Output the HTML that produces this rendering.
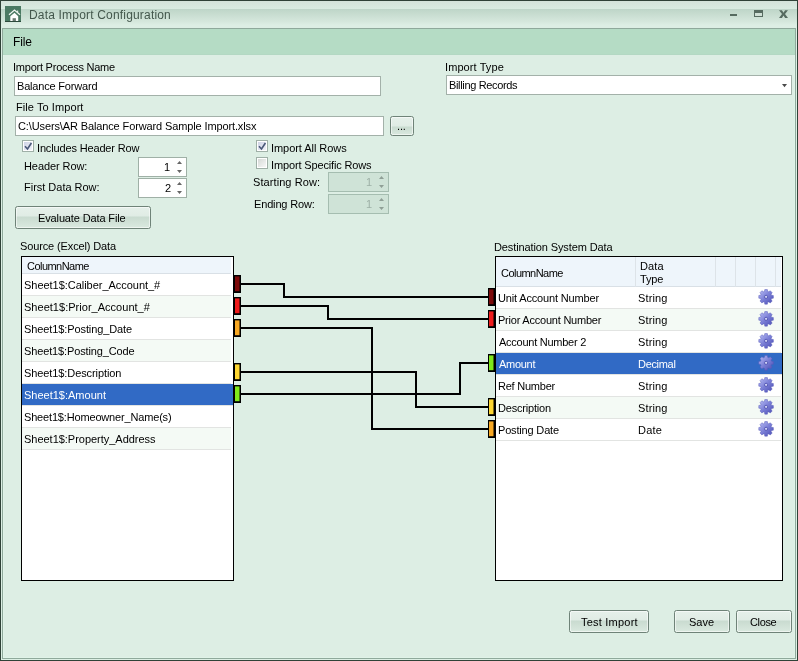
<!DOCTYPE html><html><head><meta charset="utf-8"><title>Data Import Configuration</title><style>
html,body{margin:0;padding:0}
body{width:798px;height:661px;overflow:hidden;position:relative;background:#2f4237;font-family:'Liberation Sans',sans-serif;font-size:11px;color:#000}
div,svg{position:absolute;box-sizing:border-box}
.t{white-space:pre;line-height:16px;height:16px;will-change:transform}
.frame{left:1px;top:1px;width:796px;height:659px;background:#dcefe4}
.title{left:1px;top:1px;width:796px;height:27px;background:linear-gradient(#d4e3da 0px,#d9ece1 8px,#bed5c8 8px,#d6e8dd 21px,#ddeee4 24px,#ddeee4 27px)}
.client{left:2px;top:28px;width:794px;height:631px;background:#ddeee4;border:1px solid #8fa99b}
.clientin{left:3px;top:29px;width:792px;height:629px;border:1px solid #e0f3e8;border-top:none}
.menu{left:3px;top:29px;width:792px;height:26px;background:#b5dcc5;border-bottom:1px solid #b3d8c3}
.tb{background:#fff;border:1px solid #a3b1a9}
.btn{border:1px solid #6f8378;border-radius:2.5px;background:linear-gradient(#e6f0ea 0px,#e0ece5 9px,#c9dbd0 10px,#dae9df 100%);box-shadow:inset 0 0 0 1px rgba(255,255,255,.55)}
.spin{background:#fff;border:1px solid #9fb0a6}
.spin.dis{background:#cfe3d7;border-color:#a5bdb0}
.cb{width:12px;height:12px;border:1px solid #9fb0a7;background:#fff}
.cb i{position:absolute;left:1px;top:1px;width:8px;height:8px;background:linear-gradient(135deg,#cfd3e6,#f1f2f8)}
.grid{background:#fff;border:1px solid #000}
.hdr{background:#eef5fb;border-bottom:1px solid #d9e0e6}
.row{height:22px;border-bottom:1px solid #e2e4e2}
.row.alt{background:#f4faf5}
.row.sel{background:#316ac5;width:100% !important}
.vs{width:1px;background:#dde3e8}
.mk{width:7px;height:18px;border:1px solid #000}
</style></head><body>
<div class="frame"></div><div class="title"></div><div class="client"></div><div class="clientin"></div><div class="menu"></div>
<svg style="left:5px;top:6px" width="16" height="16" viewBox="0 0 16 16"><rect width="16" height="16" fill="#4b7a63"/><path d="M9.5 6.7 L13.2 10.2 V15 H5.3 V10.2 Z" fill="#fff"/><path d="M4 8.8 L9.5 4 L15 8.8" fill="none" stroke="#f4f8f5" stroke-width="1.2"/><rect x="12" y="4.6" width="1.2" height="1.8" fill="#e6efe9"/><rect x="7.6" y="12.2" width="3.3" height="2.8" fill="#6b7a72"/><rect x="0" y="15" width="16" height="1" fill="#2d4a3c"/></svg>
<svg style="left:725px;top:6px" width="68" height="16" viewBox="725 6 68 16"><rect x="730" y="14" width="7" height="2" fill="#566b60"/><rect x="754.5" y="10.5" width="8" height="6" fill="#cfdfd5" stroke="#566b60"/><rect x="754" y="10" width="9" height="3" fill="#566b60"/><path d="M779 10.2h2.9l1.6 2.6 1.6-2.6h2.9l-3 3.9 3 3.9h-2.9l-1.6-2.6-1.6 2.6h-2.9l3-3.9z" fill="#566b60"/></svg>
<div class="tb" style="left:14px;top:76px;width:367px;height:20px"></div>
<div class="tb" style="left:446px;top:75px;width:346px;height:20px"></div>
<svg style="left:781px;top:84px" width="7" height="4"><path d="M1 0 H6 L3.5 3.2 Z" fill="#4a4a4a"/></svg>
<div class="tb" style="left:15px;top:116px;width:369px;height:20px"></div>
<div class="btn" style="left:390px;top:116px;width:24px;height:20px"></div>
<div class="cb" style="left:22px;top:140px"><i></i><svg style="left:1px;top:0px" width="10" height="10"><path d="M1 5.2 L3.5 8 L7.4 2" fill="none" stroke="#4a5878" stroke-width="1.6"/></svg></div>
<div class="cb" style="left:256px;top:140px"><i></i><svg style="left:1px;top:0px" width="10" height="10"><path d="M1 5.2 L3.5 8 L7.4 2" fill="none" stroke="#4a5878" stroke-width="1.6"/></svg></div>
<div class="cb" style="left:256px;top:157px"><i style="background:linear-gradient(135deg,#d5d9d6,#f7f7f7)"></i></div>
<div class="spin" style="left:138px;top:157px;width:49px;height:20px"><svg style="right:3px;top:3px" width="7" height="13"><path d="M1 3 L3.5 0 L6 3 Z M1 9 L3.5 12 L6 9 Z" fill="#666"/></svg></div>
<div class="spin" style="left:138px;top:178px;width:49px;height:20px"><svg style="right:3px;top:3px" width="7" height="13"><path d="M1 3 L3.5 0 L6 3 Z M1 9 L3.5 12 L6 9 Z" fill="#666"/></svg></div>
<div class="spin dis" style="left:328px;top:172px;width:61px;height:20px"><svg style="right:3px;top:3px" width="7" height="13"><path d="M1 3 L3.5 0 L6 3 Z M1 9 L3.5 12 L6 9 Z" fill="#8f9f96"/></svg></div>
<div class="spin dis" style="left:328px;top:194px;width:61px;height:20px"><svg style="right:3px;top:3px" width="7" height="13"><path d="M1 3 L3.5 0 L6 3 Z M1 9 L3.5 12 L6 9 Z" fill="#8f9f96"/></svg></div>
<div class="btn" style="left:15px;top:206px;width:136px;height:23px"></div>
<div class="btn" style="left:569px;top:610px;width:80px;height:23px"></div>
<div class="btn" style="left:674px;top:610px;width:56px;height:23px"></div>
<div class="btn" style="left:736px;top:610px;width:56px;height:23px"></div>
<div class="grid" style="left:21px;top:256px;width:213px;height:325px">
<div class="hdr" style="left:0;top:0;width:209px;height:17px"></div>
<div class="row" style="left:0;top:17px;width:209px"></div>
<div class="row alt" style="left:0;top:39px;width:209px"></div>
<div class="row" style="left:0;top:61px;width:209px"></div>
<div class="row alt" style="left:0;top:83px;width:209px"></div>
<div class="row" style="left:0;top:105px;width:209px"></div>
<div class="row alt sel" style="left:0;top:127px;width:209px"></div>
<div class="row" style="left:0;top:149px;width:209px"></div>
<div class="row alt" style="left:0;top:171px;width:209px"></div>
</div>
<div class="grid" style="left:495px;top:256px;width:288px;height:325px">
<div class="hdr" style="left:0;top:0;width:285px;height:30px"></div>
<div class="vs" style="left:139px;top:0px;height:30px"></div>
<div class="vs" style="left:219px;top:0px;height:30px"></div>
<div class="vs" style="left:239px;top:0px;height:30px"></div>
<div class="vs" style="left:259px;top:0px;height:30px"></div>
<div class="vs" style="left:279px;top:0px;height:30px"></div>
<div class="row" style="left:0;top:30px;width:285px"></div>
<div class="row alt" style="left:0;top:52px;width:285px"></div>
<div class="row" style="left:0;top:74px;width:285px"></div>
<div class="row alt sel" style="left:0;top:96px;width:285px"></div>
<div class="row" style="left:0;top:118px;width:285px"></div>
<div class="row alt" style="left:0;top:140px;width:285px"></div>
<div class="row" style="left:0;top:162px;width:285px"></div>
</div>
<svg style="left:0;top:0" width="798" height="661" viewBox="0 0 798 661"><linearGradient id="gg" x1="0" y1="0" x2="1" y2="1"><stop offset="0" stop-color="#bdc1f6"/><stop offset=".5" stop-color="#7a7ed6"/><stop offset="1" stop-color="#4a4db2"/></linearGradient>
<g transform="translate(758.6 289.0) scale(.935)"><path d="M6.6 0.6h2.8l.3 1.9 1.2.5 1.6-1.1 2 2-1.1 1.6.5 1.2 1.9.3v2.8l-1.9.3-.5 1.2 1.1 1.6-2 2-1.6-1.1-1.2.5-.3 1.9H6.6l-.3-1.9-1.2-.5-1.6 1.1-2-2 1.1-1.6-.5-1.2L.2 9.8V7l1.9-.3.5-1.2-1.1-1.6 2-2 1.6 1.1 1.2-.5z" fill="url(#gg)" stroke="#5558b8" stroke-width=".5"/><circle cx="8" cy="8.4" r="1.7" fill="#cfd2f4" stroke="#4c4fae" stroke-width=".9"/></g>
<g transform="translate(758.6 311.0) scale(.935)"><path d="M6.6 0.6h2.8l.3 1.9 1.2.5 1.6-1.1 2 2-1.1 1.6.5 1.2 1.9.3v2.8l-1.9.3-.5 1.2 1.1 1.6-2 2-1.6-1.1-1.2.5-.3 1.9H6.6l-.3-1.9-1.2-.5-1.6 1.1-2-2 1.1-1.6-.5-1.2L.2 9.8V7l1.9-.3.5-1.2-1.1-1.6 2-2 1.6 1.1 1.2-.5z" fill="url(#gg)" stroke="#5558b8" stroke-width=".5"/><circle cx="8" cy="8.4" r="1.7" fill="#cfd2f4" stroke="#4c4fae" stroke-width=".9"/></g>
<g transform="translate(758.6 333.0) scale(.935)"><path d="M6.6 0.6h2.8l.3 1.9 1.2.5 1.6-1.1 2 2-1.1 1.6.5 1.2 1.9.3v2.8l-1.9.3-.5 1.2 1.1 1.6-2 2-1.6-1.1-1.2.5-.3 1.9H6.6l-.3-1.9-1.2-.5-1.6 1.1-2-2 1.1-1.6-.5-1.2L.2 9.8V7l1.9-.3.5-1.2-1.1-1.6 2-2 1.6 1.1 1.2-.5z" fill="url(#gg)" stroke="#5558b8" stroke-width=".5"/><circle cx="8" cy="8.4" r="1.7" fill="#cfd2f4" stroke="#4c4fae" stroke-width=".9"/></g>
<g transform="translate(758.6 355.0) scale(.935)"><path d="M6.6 0.6h2.8l.3 1.9 1.2.5 1.6-1.1 2 2-1.1 1.6.5 1.2 1.9.3v2.8l-1.9.3-.5 1.2 1.1 1.6-2 2-1.6-1.1-1.2.5-.3 1.9H6.6l-.3-1.9-1.2-.5-1.6 1.1-2-2 1.1-1.6-.5-1.2L.2 9.8V7l1.9-.3.5-1.2-1.1-1.6 2-2 1.6 1.1 1.2-.5z" fill="url(#gg)" stroke="#5558b8" stroke-width=".5"/><circle cx="8" cy="8.4" r="1.7" fill="#cfd2f4" stroke="#4c4fae" stroke-width=".9"/></g>
<g transform="translate(758.6 377.0) scale(.935)"><path d="M6.6 0.6h2.8l.3 1.9 1.2.5 1.6-1.1 2 2-1.1 1.6.5 1.2 1.9.3v2.8l-1.9.3-.5 1.2 1.1 1.6-2 2-1.6-1.1-1.2.5-.3 1.9H6.6l-.3-1.9-1.2-.5-1.6 1.1-2-2 1.1-1.6-.5-1.2L.2 9.8V7l1.9-.3.5-1.2-1.1-1.6 2-2 1.6 1.1 1.2-.5z" fill="url(#gg)" stroke="#5558b8" stroke-width=".5"/><circle cx="8" cy="8.4" r="1.7" fill="#cfd2f4" stroke="#4c4fae" stroke-width=".9"/></g>
<g transform="translate(758.6 399.0) scale(.935)"><path d="M6.6 0.6h2.8l.3 1.9 1.2.5 1.6-1.1 2 2-1.1 1.6.5 1.2 1.9.3v2.8l-1.9.3-.5 1.2 1.1 1.6-2 2-1.6-1.1-1.2.5-.3 1.9H6.6l-.3-1.9-1.2-.5-1.6 1.1-2-2 1.1-1.6-.5-1.2L.2 9.8V7l1.9-.3.5-1.2-1.1-1.6 2-2 1.6 1.1 1.2-.5z" fill="url(#gg)" stroke="#5558b8" stroke-width=".5"/><circle cx="8" cy="8.4" r="1.7" fill="#cfd2f4" stroke="#4c4fae" stroke-width=".9"/></g>
<g transform="translate(758.6 421.0) scale(.935)"><path d="M6.6 0.6h2.8l.3 1.9 1.2.5 1.6-1.1 2 2-1.1 1.6.5 1.2 1.9.3v2.8l-1.9.3-.5 1.2 1.1 1.6-2 2-1.6-1.1-1.2.5-.3 1.9H6.6l-.3-1.9-1.2-.5-1.6 1.1-2-2 1.1-1.6-.5-1.2L.2 9.8V7l1.9-.3.5-1.2-1.1-1.6 2-2 1.6 1.1 1.2-.5z" fill="url(#gg)" stroke="#5558b8" stroke-width=".5"/><circle cx="8" cy="8.4" r="1.7" fill="#cfd2f4" stroke="#4c4fae" stroke-width=".9"/></g>
<g fill="none" stroke="#000" stroke-width="2" stroke-linejoin="miter">
<path d="M241 284H284V297H488"/><path d="M241 306H328V319H488"/><path d="M241 328H372V429H488"/><path d="M241 372H416V407H488"/><path d="M241 394H460V363H488"/></g>
<rect x="234" y="275" width="7" height="18" fill="#000"/><rect x="235" y="276.4" width="4.5" height="14.8" fill="#7d0a0a"/>
<rect x="234" y="297" width="7" height="18" fill="#000"/><rect x="235" y="298.4" width="4.5" height="14.8" fill="#ee1c1c"/>
<rect x="234" y="319" width="7" height="18" fill="#000"/><rect x="235" y="320.4" width="4.5" height="14.8" fill="#f7a823"/>
<rect x="234" y="363" width="7" height="18" fill="#000"/><rect x="235" y="364.4" width="4.5" height="14.8" fill="#fdd631"/>
<rect x="234" y="385" width="7" height="18" fill="#000"/><rect x="235" y="386.4" width="4.5" height="14.8" fill="#7fe81a"/>
<rect x="488" y="288" width="7" height="18" fill="#000"/><rect x="489" y="289.4" width="4.5" height="14.8" fill="#7d0a0a"/>
<rect x="488" y="310" width="7" height="18" fill="#000"/><rect x="489" y="311.4" width="4.5" height="14.8" fill="#ee1c1c"/>
<rect x="488" y="354" width="7" height="18" fill="#000"/><rect x="489" y="355.4" width="4.5" height="14.8" fill="#7fe81a"/>
<rect x="488" y="398" width="7" height="18" fill="#000"/><rect x="489" y="399.4" width="4.5" height="14.8" fill="#fdd631"/>
<rect x="488" y="420" width="7" height="18" fill="#000"/><rect x="489" y="421.4" width="4.5" height="14.8" fill="#f7a823"/>
</svg>
<div class="t" style="left:29px;top:7px;font-size:12px;letter-spacing:0.183px;color:#43574c">Data Import Configuration</div>
<div class="t" style="left:13px;top:34px;font-size:12px;letter-spacing:-0.133px;color:#000">File</div>
<div class="t" style="left:13px;top:59px;font-size:11px;letter-spacing:-0.233px;color:#000">Import Process Name</div>
<div class="t" style="left:17px;top:78px;font-size:11px;letter-spacing:-0.186px;color:#000">Balance Forward</div>
<div class="t" style="left:445px;top:59px;font-size:11px;letter-spacing:0.09px;color:#000">Import Type</div>
<div class="t" style="left:449px;top:77px;font-size:11px;letter-spacing:-0.343px;color:#000">Billing Records</div>
<div class="t" style="left:16px;top:99px;font-size:11px;letter-spacing:0.077px;color:#000">File To Import</div>
<div class="t" style="left:18px;top:118px;font-size:11px;letter-spacing:-0.122px;color:#000">C:\Users\AR Balance Forward Sample Import.xlsx</div>
<div class="t" style="left:37px;top:140px;font-size:11px;letter-spacing:-0.15px;color:#000">Includes Header Row</div>
<div class="t" style="left:24px;top:158px;font-size:11px;letter-spacing:-0.08px;color:#000">Header Row:</div>
<div class="t" style="left:24px;top:179px;font-size:11px;letter-spacing:-0.014px;color:#000">First Data Row:</div>
<div class="t" style="left:164px;top:159px;font-size:11px;letter-spacing:-0.129px;color:#000">1</div>
<div class="t" style="left:165px;top:180px;font-size:11px;letter-spacing:-0.129px;color:#000">2</div>
<div class="t" style="left:271px;top:140px;font-size:11px;letter-spacing:-0.05px;color:#000">Import All Rows</div>
<div class="t" style="left:271px;top:157px;font-size:11px;letter-spacing:-0.142px;color:#000">Import Specific Rows</div>
<div class="t" style="left:253px;top:174px;font-size:11px;letter-spacing:0.083px;color:#000">Starting Row:</div>
<div class="t" style="left:254px;top:196px;font-size:11px;letter-spacing:-0.16px;color:#000">Ending Row:</div>
<div class="t" style="left:366px;top:174px;font-size:11px;letter-spacing:-0.129px;color:#9db0a6">1</div>
<div class="t" style="left:366px;top:196px;font-size:11px;letter-spacing:-0.129px;color:#9db0a6">1</div>
<div class="t" style="left:38px;top:210px;font-size:11px;letter-spacing:-0.129px;color:#000">Evaluate Data File</div>
<div class="t" style="left:20px;top:238px;font-size:11px;letter-spacing:-0.128px;color:#000">Source (Excel) Data</div>
<div class="t" style="left:494px;top:239px;font-size:11px;letter-spacing:-0.114px;color:#000">Destination System Data</div>
<div class="t" style="left:27px;top:258px;font-size:11px;letter-spacing:-0.533px;color:#000">ColumnName</div>
<div class="t" style="left:24px;top:277px;font-size:11px;letter-spacing:-0.033px;color:#000">Sheet1$:Caliber_Account_#</div>
<div class="t" style="left:24px;top:299px;font-size:11px;letter-spacing:0.023px;color:#000">Sheet1$:Prior_Account_#</div>
<div class="t" style="left:24px;top:321px;font-size:11px;letter-spacing:-0.1px;color:#000">Sheet1$:Posting_Date</div>
<div class="t" style="left:24px;top:343px;font-size:11px;letter-spacing:-0.132px;color:#000">Sheet1$:Posting_Code</div>
<div class="t" style="left:24px;top:365px;font-size:11px;letter-spacing:-0.089px;color:#000">Sheet1$:Description</div>
<div class="t" style="left:24px;top:387px;font-size:11px;letter-spacing:0.0px;color:#fff">Sheet1$:Amount</div>
<div class="t" style="left:24px;top:409px;font-size:11px;letter-spacing:-0.167px;color:#000">Sheet1$:Homeowner_Name(s)</div>
<div class="t" style="left:24px;top:431px;font-size:11px;letter-spacing:-0.022px;color:#000">Sheet1$:Property_Address</div>
<div class="t" style="left:501px;top:265px;font-size:11px;letter-spacing:-0.533px;color:#000">ColumnName</div>
<div class="t" style="left:640px;top:258px;font-size:11px;letter-spacing:0.1px;color:#000">Data</div>
<div class="t" style="left:640px;top:271px;font-size:11px;letter-spacing:-0.2px;color:#000">Type</div>
<div class="t" style="left:498px;top:290px;font-size:11px;letter-spacing:-0.156px;color:#000">Unit Account Number</div>
<div class="t" style="left:638px;top:290px;font-size:11px;letter-spacing:0.12px;color:#000">String</div>
<div class="t" style="left:498px;top:312px;font-size:11px;letter-spacing:-0.221px;color:#000">Prior Account Number</div>
<div class="t" style="left:638px;top:312px;font-size:11px;letter-spacing:0.12px;color:#000">String</div>
<div class="t" style="left:499px;top:334px;font-size:11px;letter-spacing:-0.253px;color:#000">Account Number 2</div>
<div class="t" style="left:638px;top:334px;font-size:11px;letter-spacing:0.12px;color:#000">String</div>
<div class="t" style="left:499px;top:356px;font-size:11px;letter-spacing:-0.28px;color:#fff">Amount</div>
<div class="t" style="left:638px;top:356px;font-size:11px;letter-spacing:-0.317px;color:#fff">Decimal</div>
<div class="t" style="left:498px;top:378px;font-size:11px;letter-spacing:-0.233px;color:#000">Ref Number</div>
<div class="t" style="left:638px;top:378px;font-size:11px;letter-spacing:0.12px;color:#000">String</div>
<div class="t" style="left:498px;top:400px;font-size:11px;letter-spacing:-0.19px;color:#000">Description</div>
<div class="t" style="left:638px;top:400px;font-size:11px;letter-spacing:0.12px;color:#000">String</div>
<div class="t" style="left:498px;top:422px;font-size:11px;letter-spacing:-0.173px;color:#000">Posting Date</div>
<div class="t" style="left:638px;top:422px;font-size:11px;letter-spacing:0.2px;color:#000">Date</div>
<div class="t" style="left:581px;top:614px;font-size:11px;letter-spacing:0.22px;color:#000">Test Import</div>
<div class="t" style="left:689px;top:614px;font-size:11px;letter-spacing:0.033px;color:#000">Save</div>
<div class="t" style="left:750px;top:614px;font-size:11px;letter-spacing:-0.375px;color:#000">Close</div>
<div class="t" style="left:397px;top:118px;font-size:11px;letter-spacing:-0.129px;color:#000">...</div>
</body></html>
